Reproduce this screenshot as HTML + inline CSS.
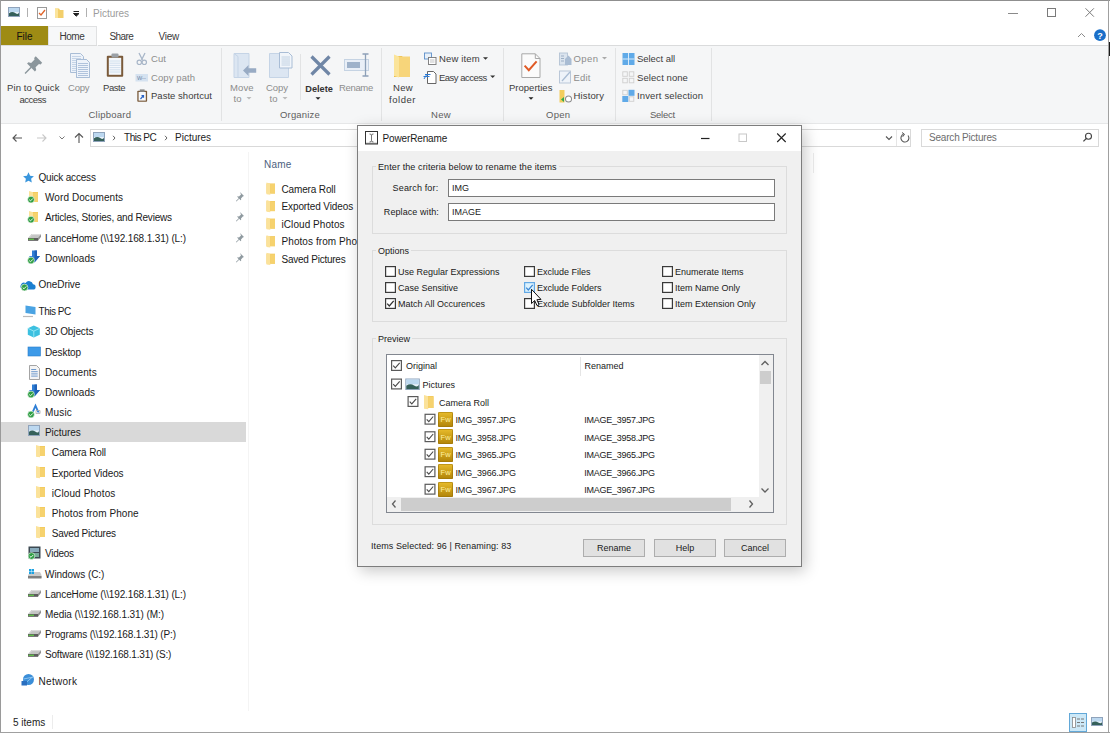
<!DOCTYPE html>
<html><head><meta charset="utf-8">
<style>
*{margin:0;padding:0;box-sizing:border-box}
html,body{width:1110px;height:733px;overflow:hidden;background:#fff;font-family:"Liberation Sans",sans-serif;position:relative}
.a{position:absolute;white-space:nowrap}
.t{position:absolute;white-space:nowrap;font-size:10px;line-height:12px;color:#1a1a1a}
.r{position:absolute;white-space:nowrap;font-size:9.5px;line-height:11px;color:#3c3c3c}
.g{color:#8c8c8c}
.d{position:absolute;white-space:nowrap;font-size:9px;line-height:11px;color:#1a1a1a}
svg{position:absolute;overflow:visible}
.fw{position:absolute;width:15px;height:15px;border-radius:1.5px;background:linear-gradient(#e8bc2c,#b08308);box-shadow:inset 0 0 0 0.6px #9a7206}
</style></head><body>

<div class="a" style="left:0px;top:0px;width:1110px;height:1px;background:#8f8f8f"></div>
<div class="a" style="left:0px;top:0px;width:1px;height:733px;background:#9a9a9a"></div>
<div class="a" style="left:1108px;top:0px;width:1px;height:733px;background:#a0a0a0"></div>
<div class="a" style="left:1109px;top:42px;width:1px;height:14px;background:#1a1a1a"></div>
<div class="a" style="left:0px;top:732px;width:1110px;height:1px;background:#a0a0a0"></div>
<div class="t" style="left:93px;top:8px;color:#9c9c9c">Pictures</div>
<div class="a" style="left:1px;top:26px;width:47px;height:19px;background:#9e8b14"></div>
<div class="t" style="left:16.5px;top:30.5px;color:#111">File</div>
<div class="a" style="left:48px;top:26px;width:49px;height:20px;background:#f7f8f9;border:1px solid #e0e1e2;border-bottom:none"></div>
<div class="t" style="left:59.5px;top:30.5px;color:#3a3a3a;letter-spacing:-0.458px;">Home</div>
<div class="t" style="left:109.5px;top:30.5px;color:#3a3a3a;letter-spacing:-0.596px;">Share</div>
<div class="t" style="left:158.5px;top:30.5px;color:#3a3a3a;letter-spacing:-0.231px;">View</div>
<div class="a" style="left:1px;top:45px;width:1107px;height:79px;background:#f5f6f7;border-top:1px solid #dadbdc;border-bottom:1px solid #e6e7e8"></div>
<div class="a" style="left:97px;top:45px;width:1px;height:1px;background:#f5f6f7"></div>
<div class="a" style="left:221px;top:48px;width:1px;height:73px;background:#e2e3e4"></div>
<div class="a" style="left:381px;top:48px;width:1px;height:73px;background:#e2e3e4"></div>
<div class="a" style="left:503px;top:48px;width:1px;height:73px;background:#e2e3e4"></div>
<div class="a" style="left:615px;top:48px;width:1px;height:73px;background:#e2e3e4"></div>
<div class="a" style="left:711px;top:48px;width:1px;height:73px;background:#e2e3e4"></div>
<div class="a" style="left:300px;top:54px;width:1px;height:46px;background:#e2e3e4"></div>
<div class="r" style="left:7px;top:82.2px;letter-spacing:0.108px;">Pin to Quick</div>
<div class="r" style="left:19.5px;top:93.8px;letter-spacing:-0.533px;">access</div>
<div class="r g" style="left:68px;top:82.2px;letter-spacing:-0.192px;">Copy</div>
<div class="r" style="left:103px;top:82.2px;letter-spacing:-0.423px;">Paste</div>
<div class="r g" style="left:151px;top:53.4px;letter-spacing:0.059px;">Cut</div>
<div class="r g" style="left:151px;top:72.0px;letter-spacing:0.100px;">Copy path</div>
<div class="r" style="left:151px;top:90.2px;letter-spacing:0.021px;">Paste shortcut</div>
<div class="r" style="left:88.5px;top:109.4px;letter-spacing:0.230px;color:#5e5e5e">Clipboard</div>
<div class="r g" style="left:230px;top:82.4px;letter-spacing:0.090px;">Move</div>
<div class="r g" style="left:233.5px;top:93.4px;">to</div>
<div class="r g" style="left:266px;top:82.4px;letter-spacing:-0.026px;">Copy</div>
<div class="r g" style="left:269.5px;top:93.4px;">to</div>
<div class="r" style="left:305.3px;top:83.8px;font-weight:bold;font-size:9.2px;color:#333;letter-spacing:-0.002px;">Delete</div>
<div class="r g" style="left:339px;top:82.4px;letter-spacing:-0.341px;">Rename</div>
<div class="r" style="left:280px;top:109.4px;letter-spacing:0.165px;color:#5e5e5e">Organize</div>
<div class="r" style="left:393px;top:82.4px;letter-spacing:0.298px;">New</div>
<div class="r" style="left:389px;top:93.6px;letter-spacing:0.548px;">folder</div>
<div class="r" style="left:439px;top:52.8px;letter-spacing:0.159px;">New item</div>
<div class="r" style="left:439px;top:71.8px;letter-spacing:-0.502px;">Easy access</div>
<div class="r" style="left:431px;top:109.4px;letter-spacing:0.298px;color:#5e5e5e">New</div>
<div class="r" style="left:509px;top:82.4px;letter-spacing:0.012px;">Properties</div>
<div class="r g" style="left:573.5px;top:52.8px;letter-spacing:0.421px;">Open</div>
<div class="r g" style="left:573.5px;top:71.8px;letter-spacing:0.177px;">Edit</div>
<div class="r" style="left:573.5px;top:90.2px;letter-spacing:0.141px;">History</div>
<div class="r" style="left:546px;top:109.4px;letter-spacing:0.254px;color:#5e5e5e">Open</div>
<div class="r" style="left:637px;top:52.8px;letter-spacing:-0.038px;">Select all</div>
<div class="r" style="left:637px;top:71.8px;letter-spacing:0.073px;">Select none</div>
<div class="r" style="left:637px;top:90.2px;letter-spacing:0.141px;">Invert selection</div>
<div class="r" style="left:650px;top:109.4px;letter-spacing:-0.261px;color:#5e5e5e">Select</div>
<div class="a" style="left:90px;top:129px;width:821px;height:18px;border:1px solid #d9d9d9"></div>
<div class="a" style="left:896px;top:130px;width:1px;height:16px;background:#e5e5e5"></div>
<div class="t" style="left:124px;top:131.5px;color:#222;letter-spacing:-0.460px;">This PC</div>
<div class="t" style="left:175px;top:131.5px;color:#222">Pictures</div>
<div class="a" style="left:921px;top:129px;width:178px;height:18px;border:1px solid #d9d9d9"></div>
<div class="t" style="left:929px;top:131.5px;color:#6d6d6d;letter-spacing:-0.199px;">Search Pictures</div>
<div class="a" style="left:1px;top:422px;width:245px;height:20px;background:#d9d9d9"></div>
<div class="a" style="left:248px;top:152px;width:1px;height:559px;background:#f4f4f4"></div>
<div class="a" style="left:813px;top:153px;width:1px;height:20px;background:#ececec"></div>
<div class="t" style="left:38.5px;top:172px;letter-spacing:-0.187px;">Quick access</div>
<div class="t" style="left:45.0px;top:192px;letter-spacing:0.080px;">Word Documents</div>
<div class="t" style="left:45.0px;top:212px;letter-spacing:-0.178px;">Articles, Stories, and Reviews</div>
<div class="t" style="left:45.0px;top:233px;letter-spacing:-0.136px;">LanceHome (\\192.168.1.31) (L:)</div>
<div class="t" style="left:45.0px;top:253px;letter-spacing:0.079px;">Downloads</div>
<div class="t" style="left:38.5px;top:279px;letter-spacing:-0.062px;">OneDrive</div>
<div class="t" style="left:38.5px;top:306px;letter-spacing:-0.460px;">This PC</div>
<div class="t" style="left:45.0px;top:326px;letter-spacing:-0.118px;">3D Objects</div>
<div class="t" style="left:45.0px;top:347px;letter-spacing:-0.097px;">Desktop</div>
<div class="t" style="left:45.0px;top:367px;letter-spacing:0.153px;">Documents</div>
<div class="t" style="left:45.0px;top:387px;letter-spacing:0.079px;">Downloads</div>
<div class="t" style="left:45.0px;top:407px;letter-spacing:0.172px;">Music</div>
<div class="t" style="left:45.0px;top:427px;letter-spacing:-0.046px;">Pictures</div>
<div class="t" style="left:51.8px;top:447px;letter-spacing:-0.137px;">Camera Roll</div>
<div class="t" style="left:51.8px;top:468px;letter-spacing:-0.100px;">Exported Videos</div>
<div class="t" style="left:51.8px;top:488px;letter-spacing:0.104px;">iCloud Photos</div>
<div class="t" style="left:51.8px;top:508px;letter-spacing:0.075px;">Photos from Phone</div>
<div class="t" style="left:51.8px;top:528px;letter-spacing:-0.235px;">Saved Pictures</div>
<div class="t" style="left:45.0px;top:548px;letter-spacing:-0.279px;">Videos</div>
<div class="t" style="left:45.0px;top:569px;letter-spacing:-0.055px;">Windows (C:)</div>
<div class="t" style="left:45.0px;top:589px;letter-spacing:-0.136px;">LanceHome (\\192.168.1.31) (L:)</div>
<div class="t" style="left:45.0px;top:609px;letter-spacing:-0.083px;">Media (\\192.168.1.31) (M:)</div>
<div class="t" style="left:45.0px;top:629px;letter-spacing:-0.159px;">Programs (\\192.168.1.31) (P:)</div>
<div class="t" style="left:45.0px;top:649px;letter-spacing:-0.187px;">Software (\\192.168.1.31) (S:)</div>
<div class="t" style="left:38.5px;top:676px;letter-spacing:0.304px;">Network</div>
<div class="t" style="left:13px;top:716.5px;color:#222">5 items</div>
<div class="a" style="left:52px;top:715px;width:1px;height:14px;background:#ececec"></div>
<div class="t" style="left:264px;top:159px;color:#4d6180;letter-spacing:0.242px;">Name</div>
<div class="t" style="left:281.5px;top:183.7px;letter-spacing:-0.147px;">Camera Roll</div>
<div class="t" style="left:281.5px;top:201.2px;letter-spacing:-0.107px;">Exported Videos</div>
<div class="t" style="left:281.5px;top:218.8px;letter-spacing:0.070px;">iCloud Photos</div>
<div class="t" style="left:281.5px;top:236.3px;letter-spacing:0.075px;">Photos from Phone</div>
<div class="t" style="left:281.5px;top:253.9px;letter-spacing:-0.235px;">Saved Pictures</div>
<div class="a" style="left:1069px;top:713px;width:18px;height:19px;background:#cce8f7;border:1px solid #62a8d8"></div>
<svg style="left:0;top:0" width="1110" height="733"><rect x="8.5" y="7.5" width="11" height="9" fill="#e9f2fb" stroke="#8fa3bb" stroke-width="1"/><rect x="9" y="8" width="10" height="4.0" fill="#bcd8f0"/><path d="M9 16V13.2Q12.2 11.0 15.2 13.0T19 12.5V16Z" fill="#35605a"/><path d="M27.5 8v9M86.5 8v9" stroke="#b0b0b0" stroke-width="1"/><rect x="37.5" y="7.5" width="9" height="11" fill="#fff" stroke="#9a9a9a" stroke-width="1"/><path d="M39 13l2 2l4-5" fill="none" stroke="#e0642a" stroke-width="1.3"/><path d="M55 8.5h4l1 1.5h3.5v8h-8.5z" fill="#f3cf6b"/><path d="M55 8.5h3v9.5h-3z" fill="#fbe49c"/><path d="M73.5 11.5h5.5M73.5 13.5h5.5l-2.75 2.7z" fill="#222" stroke="#222" stroke-width="1"/><path d="M1008 13.5h10" stroke="#8a8a8a" stroke-width="1"/><rect x="1047.5" y="8.5" width="8" height="8" fill="none" stroke="#7a7a7a" stroke-width="1"/><path d="M1085.5 8.3l8.4 8.4M1093.9 8.3l-8.4 8.4" stroke="#7a7a7a" stroke-width="1"/><path d="M1078 37l3.5-3.5l3.5 3.5" fill="none" stroke="#8a8a8a" stroke-width="1"/><circle cx="1100" cy="35.2" r="5.9" fill="#1a6fc9"/><text x="1100" y="38.8" font-size="9" font-weight="bold" fill="#fff" text-anchor="middle" font-family="Liberation Sans">?</text><path d="M315.5 97.2h5l-2.5 2.6z" fill="#222"/><path d="M528.5 97.2h5l-2.5 2.6z" fill="#222"/><path d="M483.0 57.2h5l-2.5 2.6z" fill="#333"/><path d="M490.2 75.5h5l-2.5 2.6z" fill="#333"/><path d="M602.0 57.0h5l-2.5 2.6z" fill="#aaa"/><path d="M246.5 97.0h5l-2.5 2.6z" fill="#bbb"/><path d="M282.5 97.0h5l-2.5 2.6z" fill="#bbb"/><g transform="translate(32 66.5) rotate(45) scale(1.2)" fill="#8b969c"><path d="M-3.8 -8.2H3.8V-6.3L2.6 -5.6V-1.6L4.6 -0.4V1.2H-4.6V-0.4L-2.6 -1.6V-5.6L-3.8 -6.3Z"/><rect x="-0.6" y="1" width="1.2" height="7.2"/></g><path d="M70.5 53.5h10l3 3v16h-13z" fill="#eef3fa" stroke="#a9bdd6" stroke-width="1"/><path d="M76.5 59.5h10l3 3v15h-13z" fill="#eef3fa" stroke="#a9bdd6" stroke-width="1"/><path d="M72 56.5h9" stroke="#c0d0e4" stroke-width="0.9"/><path d="M72 58.5h9" stroke="#c0d0e4" stroke-width="0.9"/><path d="M72 60.5h9" stroke="#c0d0e4" stroke-width="0.9"/><path d="M72 62.5h9" stroke="#c0d0e4" stroke-width="0.9"/><path d="M72 64.5h9" stroke="#c0d0e4" stroke-width="0.9"/><path d="M72 66.5h9" stroke="#c0d0e4" stroke-width="0.9"/><path d="M72 68.5h9" stroke="#c0d0e4" stroke-width="0.9"/><path d="M72 70.5h9" stroke="#c0d0e4" stroke-width="0.9"/><path d="M76.5 59.5h10l3 3v15h-13z" fill="#eef3fa" stroke="#a9bdd6" stroke-width="1"/><path d="M78 63.5h10" stroke="#a8bdd8" stroke-width="0.9"/><path d="M78 65.5h10" stroke="#a8bdd8" stroke-width="0.9"/><path d="M78 67.5h10" stroke="#a8bdd8" stroke-width="0.9"/><path d="M78 69.5h10" stroke="#a8bdd8" stroke-width="0.9"/><path d="M78 71.5h10" stroke="#a8bdd8" stroke-width="0.9"/><path d="M78 73.5h10" stroke="#a8bdd8" stroke-width="0.9"/><path d="M78 75.5h10" stroke="#a8bdd8" stroke-width="0.9"/><rect x="106.8" y="55.8" width="16.4" height="21" rx="1" fill="#7a5a3a"/><rect x="108.8" y="57.8" width="12.4" height="17" fill="#f4f8fc"/><path d="M109.5 61.0h11" stroke="#c9d9ea" stroke-width="0.8"/><path d="M109.5 63.2h11" stroke="#c9d9ea" stroke-width="0.8"/><path d="M109.5 65.4h11" stroke="#c9d9ea" stroke-width="0.8"/><path d="M109.5 67.6h11" stroke="#c9d9ea" stroke-width="0.8"/><path d="M109.5 69.8h11" stroke="#c9d9ea" stroke-width="0.8"/><path d="M109.5 72.0h11" stroke="#c9d9ea" stroke-width="0.8"/><rect x="111.5" y="53.5" width="7" height="4" rx="1" fill="#9aa0a6"/><path d="M139 53l3.5 7M145 53l-3.5 7" stroke="#a8b6c8" stroke-width="1.3"/><circle cx="139.3" cy="62.3" r="2.2" fill="none" stroke="#a8b6c8" stroke-width="1.2"/><circle cx="144.3" cy="62.3" r="2.2" fill="none" stroke="#a8b6c8" stroke-width="1.2"/><rect x="135.5" y="74" width="12.5" height="7.5" fill="#d5e2f0"/><text x="137" y="80" font-size="5.5" fill="#6d85a6" font-family="Liberation Sans">W--</text><rect x="137.3" y="90.8" width="9.8" height="11" rx="0.8" fill="#7a5a3a"/><rect x="138.6" y="92" width="7.2" height="8.6" fill="#f6f8fb"/><rect x="139.8" y="89.4" width="4.8" height="2.5" fill="#888"/><path d="M140.5 99l3-3.3M141.5 95.7h2v2" stroke="#2a64c5" stroke-width="1.2" fill="none"/><path d="M234 53.5h15v24h-15z" fill="#dce6f2" stroke="#c5d4e6" stroke-width="1"/><path d="M234 53.5l4 3v21" fill="none" stroke="#c5d4e6"/><path d="M243 70.5l5.5-5.5v3.3h7.7v4.4h-7.7v3.3z" fill="#98abc4"/><path d="M269.5 53.5h19v24h-19z" fill="#dce6f2" stroke="#c5d4e6" stroke-width="1"/><path d="M279.5 52.5h9l3.5 3.5v12h-12.5z" fill="#f1f5fa" stroke="#a9bdd6" stroke-width="1"/><path d="M281.5 57h8.5" stroke="#b8c9dd" stroke-width="0.8"/><path d="M281.5 59h8.5" stroke="#b8c9dd" stroke-width="0.8"/><path d="M281.5 61h8.5" stroke="#b8c9dd" stroke-width="0.8"/><path d="M281.5 63h8.5" stroke="#b8c9dd" stroke-width="0.8"/><path d="M281.5 65h8.5" stroke="#b8c9dd" stroke-width="0.8"/><path d="M311.5 56.5l18 18M329.5 56.5l-18 18" stroke="#6f86a6" stroke-width="3.2"/><rect x="344.5" y="59.5" width="24" height="11" fill="#e9eff7" stroke="#c5d3e3" stroke-width="1"/><rect x="347" y="62" width="13" height="6" fill="#9fb2ca"/><path d="M362.5 54h6M362.5 76h6M365.5 54v22" stroke="#8da0b8" stroke-width="1.3" fill="none"/><path d="M394 56h8l1.5 2.5h6.5v18.5h-16z" fill="#e9b93e"/><path d="M394 54.5l5 2v21l-5-1.5z" fill="#fbe49a"/><path d="M399 56.5h11v20.5h-11z" fill="#f7d57a"/><rect x="424.5" y="53" width="7" height="6" fill="#e8f0f8" stroke="#5c8fc9" stroke-width="0.9"/><rect x="428.5" y="57.5" width="7.5" height="7" fill="#fff" stroke="#777" stroke-width="0.9"/><path d="M430 60h4.5M430 62h4.5" stroke="#aaa" stroke-width="0.7"/><path d="M427.5 71.5h6l2.5 2.5v9.5h-8.5z" fill="#fff" stroke="#555" stroke-width="0.9"/><path d="M423.5 76.5h6M425 74.5h5.5M424 79l3-5" stroke="#2d7bd6" stroke-width="1"/><path d="M521.8 53.8h13.5l4.7 4.7v19h-18.2z" fill="#fbfbfb" stroke="#a8a8a8" stroke-width="1"/><path d="M535.3 53.8v4.7h4.7" fill="none" stroke="#a8a8a8"/><path d="M524.6 65.6l4.2 4.6l7.8-8.8" fill="none" stroke="#e05a25" stroke-width="2"/><rect x="559.5" y="53" width="8" height="12" fill="#dbe4ee" stroke="#b4c3d4" stroke-width="0.9"/><path d="M561 56h3M561 58.5h3M561 61h3" stroke="#95a8bf" stroke-width="0.9"/><path d="M565 65v-6l3.5-3.5l3 3.5v6z" fill="#a9bcd3"/><rect x="559.5" y="71" width="11" height="12" fill="#eef3f9" stroke="#b4c3d4" stroke-width="0.9"/><path d="M562 81l8-9" stroke="#a9bcd3" stroke-width="1.3"/><path d="M559.5 90h5v12.5h-5z" fill="#f2cd5c"/><circle cx="568.5" cy="99" r="3.5" fill="#8a8a8a"/><circle cx="568.5" cy="99" r="2.5" fill="#fff"/><path d="M561 99.5l3-2.5v5z" fill="#2fa84f"/><rect x="622.5" y="53" width="12" height="12" fill="#60aae8"/><path d="M628.5 53v12M622.5 59h12" stroke="#d7ebfb" stroke-width="1"/><rect x="622.8" y="71.8" width="4.5" height="4.5" fill="none" stroke="#cfcfcf" stroke-width="0.9"/><rect x="622.8" y="78.3" width="4.5" height="4.5" fill="none" stroke="#cfcfcf" stroke-width="0.9"/><rect x="629.3" y="71.8" width="4.5" height="4.5" fill="none" stroke="#cfcfcf" stroke-width="0.9"/><rect x="629.3" y="78.3" width="4.5" height="4.5" fill="none" stroke="#cfcfcf" stroke-width="0.9"/><rect x="622.8" y="90.3" width="4.5" height="4.5" fill="none" stroke="#cfcfcf" stroke-width="0.9"/><rect x="629.3" y="96.8" width="4.5" height="4.5" fill="none" stroke="#cfcfcf" stroke-width="0.9"/><rect x="628.5" y="89.8" width="6" height="6" fill="#60aae8"/><rect x="622.3" y="96" width="6" height="6" fill="#60aae8"/><path d="M13 138h9M16.5 134.5l-3.5 3.5l3.5 3.5" fill="none" stroke="#555" stroke-width="1.1"/><path d="M37 138h9M42.5 134.5l3.5 3.5l-3.5 3.5" fill="none" stroke="#c8c8c8" stroke-width="1.1"/><path d="M59.5 136.5l2.5 2.5l2.5-2.5" fill="none" stroke="#777" stroke-width="1"/><path d="M79 143v-9.5M75 137.5l4-4l4 4" fill="none" stroke="#555" stroke-width="1.1"/><rect x="93.5" y="132.5" width="11" height="9" fill="#e9f2fb" stroke="#8fa3bb" stroke-width="1"/><rect x="94" y="133" width="10" height="4.0" fill="#bcd8f0"/><path d="M94 141V138.2Q97.2 136.0 100.2 138.0T104 137.5V141Z" fill="#35605a"/><path d="M113 135.8l2 2.2l-2 2.2M165 135.8l2 2.2l-2 2.2" fill="none" stroke="#666" stroke-width="1"/><path d="M886 136.5l3 3l3-3" fill="none" stroke="#555" stroke-width="1.1"/><path d="M908 135.5a4 4 0 1 1 -4.5 -1.2" fill="none" stroke="#555" stroke-width="1.1"/><path d="M902 132.5l2.5 1.8l-1.8 2.5" fill="none" stroke="#555" stroke-width="1"/><circle cx="1088.5" cy="136.3" r="3" fill="none" stroke="#444" stroke-width="1.1"/><path d="M1086.4 138.4l-3 3" stroke="#444" stroke-width="1.3"/><path d="M240 192l4 4l-1.2 0.4l-1.8 2l0.2 1.3l-0.5 0.5l-1.5-1.5l-2.8 2.8l-0.5-0.5l2.8-2.8l-1.5-1.5l0.5-0.5l1.3 0.2l2-1.8z" fill="#8f9aa0"/><path d="M240 212l4 4l-1.2 0.4l-1.8 2l0.2 1.3l-0.5 0.5l-1.5-1.5l-2.8 2.8l-0.5-0.5l2.8-2.8l-1.5-1.5l0.5-0.5l1.3 0.2l2-1.8z" fill="#8f9aa0"/><path d="M240 233l4 4l-1.2 0.4l-1.8 2l0.2 1.3l-0.5 0.5l-1.5-1.5l-2.8 2.8l-0.5-0.5l2.8-2.8l-1.5-1.5l0.5-0.5l1.3 0.2l2-1.8z" fill="#8f9aa0"/><path d="M240 253l4 4l-1.2 0.4l-1.8 2l0.2 1.3l-0.5 0.5l-1.5-1.5l-2.8 2.8l-0.5-0.5l2.8-2.8l-1.5-1.5l0.5-0.5l1.3 0.2l2-1.8z" fill="#8f9aa0"/><path d="M28.5 172.3l1.6 3.4l3.8 0.5l-2.8 2.6l0.7 3.7l-3.3-1.8l-3.3 1.8l0.7-3.7l-2.8-2.6l3.8-0.5z" fill="#3a96dd"/><path d="M29 192h9v10h-9z" fill="#f0c450"/><path d="M29 191l4.05 1.2v11l-4.05 -0.5z" fill="#fbe29a"/><path d="M33.05 192.5h4.95v9.5h-4.95z" fill="#f6d26e"/><circle cx="31" cy="199.6" r="3.4" fill="#2f9e44" stroke="#fff" stroke-width="0.6"/><path d="M29.2 199.6l1.3 1.3l2.3-2.4" fill="none" stroke="#fff" stroke-width="0.9"/><path d="M29 212h9v10h-9z" fill="#f0c450"/><path d="M29 211l4.05 1.2v11l-4.05 -0.5z" fill="#fbe29a"/><path d="M33.05 212.5h4.95v9.5h-4.95z" fill="#f6d26e"/><circle cx="31" cy="219.6" r="3.4" fill="#2f9e44" stroke="#fff" stroke-width="0.6"/><path d="M29.2 219.6l1.3 1.3l2.3-2.4" fill="none" stroke="#fff" stroke-width="0.9"/><path d="M28 238L31.5 234H41V236.5L38 240.5H28Z" fill="#c4c4c4"/><path d="M28 238H38V240.8H28Z" fill="#5d5d5d"/><path d="M38 238L41 234.5V236.8L38 240.8Z" fill="#8e8e8e"/><path d="M28.5 239.3H34" stroke="#63c24a" stroke-width="1.3"/><path d="M29 237.6L31.8 234.6H40.5" stroke="#e6e6e6" stroke-width="0.8" fill="none"/><path d="M32 250.5h5v5.5h3l-5.5 6.5l-5.5-6.5h3z" fill="#2f7fd6"/><path d="M34.5 250.5h2.5v5.5h3l-5.5 6.5z" fill="#1f62b8"/><circle cx="31" cy="260.5" r="3.4" fill="#2f9e44" stroke="#fff" stroke-width="0.6"/><path d="M29.2 260.5l1.3 1.3l2.3-2.4" fill="none" stroke="#fff" stroke-width="0.9"/><path d="M22.5 289.5h10.5a2.6 2.6 0 0 0 0-5.2a4 4 0 0 0-7.4-1.2a3 3 0 0 0-3.1 6.4z" fill="#1b7fd0"/><circle cx="24.5" cy="287.5" r="3.4" fill="#2f9e44" stroke="#fff" stroke-width="0.6"/><path d="M22.7 287.5l1.3 1.3l2.3-2.4" fill="none" stroke="#fff" stroke-width="0.9"/><path d="M25.5 305.5l10 1.5v7.5l-10-1.5z" fill="#4aa3e3"/><path d="M23 316.5h10" stroke="#bbb" stroke-width="1.2"/><path d="M33.8 325.5l6 2.8v6.4l-6 2.8l-6-2.8v-6.4z" fill="#3cc0e0"/><path d="M27.8 328.3l6 2.8l6-2.8M33.8 331.1v6.4" fill="none" stroke="#a8ecf7" stroke-width="0.8"/><rect x="28" y="347" width="12.5" height="9" fill="#3d9ae8" stroke="#2a7cc8" stroke-width="0.6"/><path d="M29.5 365.5h7l3 3v11h-10z" fill="#f4f4f4" stroke="#9a9a9a" stroke-width="0.9"/><path d="M31.2 369.5h5M31.2 371.7h6.5M31.2 373.9h6.5M31.2 376.1h6.5" stroke="#5f8fc8" stroke-width="0.9"/><path d="M32 384.5h5v5.5h3l-5.5 6.5l-5.5-6.5h3z" fill="#2f7fd6"/><path d="M34.5 384.5h2.5v5.5h3l-5.5 6.5z" fill="#1f62b8"/><circle cx="31" cy="394.5" r="3.4" fill="#2f9e44" stroke="#fff" stroke-width="0.6"/><path d="M29.2 394.5l1.3 1.3l2.3-2.4" fill="none" stroke="#fff" stroke-width="0.9"/><path d="M35.5 403.5l-4 9h2l2-4.5l2 4.5h2z" fill="#2f7fd6"/><path d="M36 410.5h4v3h-4z" fill="none" stroke="#aaa" stroke-width="0.8"/><circle cx="31" cy="414.5" r="3.4" fill="#2f9e44" stroke="#fff" stroke-width="0.6"/><path d="M29.2 414.5l1.3 1.3l2.3-2.4" fill="none" stroke="#fff" stroke-width="0.9"/><rect x="28.5" y="425.5" width="11" height="10" fill="#e9f2fb" stroke="#8fa3bb" stroke-width="1"/><rect x="29" y="426" width="10" height="4.5" fill="#bcd8f0"/><path d="M29 435V431.82Q32.2 429.4 35.2 431.6T39 431.05V435Z" fill="#35605a"/><path d="M36 446h9v10h-9z" fill="#f0c450"/><path d="M36 445l4.05 1.2v11l-4.05 -0.5z" fill="#fbe29a"/><path d="M40.05 446.5h4.95v9.5h-4.95z" fill="#f6d26e"/><path d="M36 467h9v10h-9z" fill="#f0c450"/><path d="M36 466l4.05 1.2v11l-4.05 -0.5z" fill="#fbe29a"/><path d="M40.05 467.5h4.95v9.5h-4.95z" fill="#f6d26e"/><path d="M36 487h9v10h-9z" fill="#f0c450"/><path d="M36 486l4.05 1.2v11l-4.05 -0.5z" fill="#fbe29a"/><path d="M40.05 487.5h4.95v9.5h-4.95z" fill="#f6d26e"/><path d="M36 507h9v10h-9z" fill="#f0c450"/><path d="M36 506l4.05 1.2v11l-4.05 -0.5z" fill="#fbe29a"/><path d="M40.05 507.5h4.95v9.5h-4.95z" fill="#f6d26e"/><path d="M36 527h9v10h-9z" fill="#f0c450"/><path d="M36 526l4.05 1.2v11l-4.05 -0.5z" fill="#fbe29a"/><path d="M40.05 527.5h4.95v9.5h-4.95z" fill="#f6d26e"/><rect x="28.5" y="546.5" width="12" height="12" fill="#3d4a52"/><rect x="30" y="548" width="9" height="4" fill="#8ab"/><rect x="30" y="553" width="9" height="4" fill="#7a9"/><circle cx="31.5" cy="556" r="3.4" fill="#2f9e44" stroke="#fff" stroke-width="0.6"/><path d="M29.7 556l1.3 1.3l2.3-2.4" fill="none" stroke="#fff" stroke-width="0.9"/><path d="M28 575l3-3h9l1.5 3v3h-13.5z" fill="#c9c9c9"/><path d="M28 576h13.5v2.5h-13.5z" fill="#7f7f7f"/><rect x="29" y="569" width="2.3" height="2.3" fill="#1ba1e2"/><rect x="31.7" y="569" width="2.3" height="2.3" fill="#1ba1e2"/><rect x="29" y="571.7" width="2.3" height="2.3" fill="#1ba1e2"/><rect x="31.7" y="571.7" width="2.3" height="2.3" fill="#1ba1e2"/><path d="M28 594L31.5 590H41V592.5L38 596.5H28Z" fill="#c4c4c4"/><path d="M28 594H38V596.8H28Z" fill="#5d5d5d"/><path d="M38 594L41 590.5V592.8L38 596.8Z" fill="#8e8e8e"/><path d="M28.5 595.3H34" stroke="#63c24a" stroke-width="1.3"/><path d="M29 593.6L31.8 590.6H40.5" stroke="#e6e6e6" stroke-width="0.8" fill="none"/><path d="M28 614L31.5 610H41V612.5L38 616.5H28Z" fill="#c4c4c4"/><path d="M28 614H38V616.8H28Z" fill="#5d5d5d"/><path d="M38 614L41 610.5V612.8L38 616.8Z" fill="#8e8e8e"/><path d="M28.5 615.3H34" stroke="#63c24a" stroke-width="1.3"/><path d="M29 613.6L31.8 610.6H40.5" stroke="#e6e6e6" stroke-width="0.8" fill="none"/><path d="M28 634L31.5 630H41V632.5L38 636.5H28Z" fill="#c4c4c4"/><path d="M28 634H38V636.8H28Z" fill="#5d5d5d"/><path d="M38 634L41 630.5V632.8L38 636.8Z" fill="#8e8e8e"/><path d="M28.5 635.3H34" stroke="#63c24a" stroke-width="1.3"/><path d="M29 633.6L31.8 630.6H40.5" stroke="#e6e6e6" stroke-width="0.8" fill="none"/><path d="M28 654L31.5 650H41V652.5L38 656.5H28Z" fill="#c4c4c4"/><path d="M28 654H38V656.8H28Z" fill="#5d5d5d"/><path d="M38 654L41 650.5V652.8L38 656.8Z" fill="#8e8e8e"/><path d="M28.5 655.3H34" stroke="#63c24a" stroke-width="1.3"/><path d="M29 653.6L31.8 650.6H40.5" stroke="#e6e6e6" stroke-width="0.8" fill="none"/><circle cx="28.5" cy="679.5" r="5.5" fill="#3b8ed8"/><path d="M23.5 679l10-2M25.5 683l7-6" stroke="#9fd0f5" stroke-width="0.8"/><rect x="21.5" y="681" width="5.5" height="4.5" fill="#2a6fc0"/><path d="M266.5 183.5h8.5v10h-8.5z" fill="#f0c450"/><path d="M266.5 182.5l3.825 1.2v11l-3.825 -0.5z" fill="#fbe29a"/><path d="M270.325 184.0h4.675000000000001v9.5h-4.675000000000001z" fill="#f6d26e"/><path d="M266.5 201.1h8.5v10h-8.5z" fill="#f0c450"/><path d="M266.5 200.1l3.825 1.2v11l-3.825 -0.5z" fill="#fbe29a"/><path d="M270.325 201.6h4.675000000000001v9.5h-4.675000000000001z" fill="#f6d26e"/><path d="M266.5 218.6h8.5v10h-8.5z" fill="#f0c450"/><path d="M266.5 217.6l3.825 1.2v11l-3.825 -0.5z" fill="#fbe29a"/><path d="M270.325 219.1h4.675000000000001v9.5h-4.675000000000001z" fill="#f6d26e"/><path d="M266.5 236.2h8.5v10h-8.5z" fill="#f0c450"/><path d="M266.5 235.2l3.825 1.2v11l-3.825 -0.5z" fill="#fbe29a"/><path d="M270.325 236.7h4.675000000000001v9.5h-4.675000000000001z" fill="#f6d26e"/><path d="M266.5 253.7h8.5v10h-8.5z" fill="#f0c450"/><path d="M266.5 252.7l3.825 1.2v11l-3.825 -0.5z" fill="#fbe29a"/><path d="M270.325 254.2h4.675000000000001v9.5h-4.675000000000001z" fill="#f6d26e"/><rect x="1072.5" y="717.5" width="3" height="10" fill="#fff" stroke="#888" stroke-width="0.8"/><path d="M1077 719h3M1081 719h3M1077 722.5h3M1081 722.5h3M1077 726h3M1081 726h3" stroke="#777" stroke-width="1"/><rect x="1091.5" y="717.5" width="11" height="8" fill="#e9f2fb" stroke="#8fa3bb" stroke-width="1"/><rect x="1092" y="718" width="10" height="3.5" fill="#bcd8f0"/><path d="M1092 725V722.58Q1095.2 720.6 1098.2 722.4T1102 721.95V725Z" fill="#35605a"/></svg>
<div class="a" style="left:357px;top:125px;width:445px;height:442px;background:#f0f0f0;border:1px solid #7d7d7d;box-shadow:3px 4px 14px rgba(0,0,0,0.22)"></div>
<div class="a" style="left:358px;top:126px;width:443px;height:25px;background:#fff"></div>
<div class="d" style="left:382.6px;top:133.2px;font-size:10px;line-height:12px;letter-spacing:-0.154px;">PowerRename</div>
<div class="a" style="left:372px;top:166px;width:415px;height:68px;border:1px solid #dcdcdc"></div>
<div class="d" style="left:376px;top:162px;padding:0 2px;background:#f0f0f0;letter-spacing:0.105px;">Enter the criteria below to rename the items</div>
<div class="a" style="left:372px;top:250px;width:415px;height:72px;border:1px solid #dcdcdc"></div>
<div class="d" style="left:376px;top:246px;padding:0 2px;background:#f0f0f0;">Options</div>
<div class="a" style="left:372px;top:338px;width:415px;height:187px;border:1px solid #dcdcdc"></div>
<div class="d" style="left:376px;top:334px;padding:0 2px;background:#f0f0f0;">Preview</div>
<div class="d" style="left:392.6px;top:183px;letter-spacing:0.158px;">Search for:</div>
<div class="d" style="left:383.8px;top:207px;letter-spacing:0.081px;">Replace with:</div>
<div class="a" style="left:448px;top:179px;width:327px;height:18px;background:#fff;border:1px solid #7a7a7a"></div>
<div class="a" style="left:448px;top:203px;width:327px;height:18px;background:#fff;border:1px solid #7a7a7a"></div>
<div class="d" style="left:452px;top:183px;">IMG</div>
<div class="d" style="left:452px;top:207px;">IMAGE</div>
<div class="d" style="left:398px;top:266.8px;">Use Regular Expressions</div>
<div class="d" style="left:398px;top:282.8px;">Case Sensitive</div>
<div class="d" style="left:398px;top:298.8px;">Match All Occurences</div>
<div class="d" style="left:537px;top:266.8px;">Exclude Files</div>
<div class="d" style="left:537px;top:282.8px;">Exclude Folders</div>
<div class="d" style="left:537px;top:298.8px;">Exclude Subfolder Items</div>
<div class="d" style="left:675px;top:266.8px;">Enumerate Items</div>
<div class="d" style="left:675px;top:282.8px;">Item Name Only</div>
<div class="d" style="left:675px;top:298.8px;">Item Extension Only</div>
<div class="a" style="left:386px;top:354px;width:388px;height:159px;background:#fff;border:1px solid #828790"></div>
<div class="a" style="left:759px;top:355px;width:14px;height:157px;background:#f0f0f0"></div>
<div class="a" style="left:387px;top:497px;width:386px;height:15px;background:#f0f0f0"></div>
<div class="a" style="left:401px;top:498px;width:330px;height:13px;background:#cdcdcd"></div>
<div class="a" style="left:760px;top:371px;width:11px;height:13px;background:#cdcdcd"></div>
<div class="a" style="left:580px;top:357px;width:1px;height:19px;background:#e5e5e5"></div>
<div class="d" style="left:406px;top:360.5px;">Original</div>
<div class="d" style="left:584.5px;top:360.5px;">Renamed</div>
<div class="d" style="left:422.5px;top:379.5px;">Pictures</div>
<div class="d" style="left:439px;top:397.5px;">Camera Roll</div>
<div class="fw" style="left:438.3px;top:411.7px"></div>
<div class="d" style="left:455.5px;top:415.4px;letter-spacing:-0.148px;">IMG_3957.JPG</div>
<div class="d" style="left:584.3px;top:415.4px;letter-spacing:-0.249px;">IMAGE_3957.JPG</div>
<div class="fw" style="left:438.3px;top:429.2px"></div>
<div class="d" style="left:455.5px;top:432.9px;letter-spacing:-0.148px;">IMG_3958.JPG</div>
<div class="d" style="left:584.3px;top:432.9px;letter-spacing:-0.249px;">IMAGE_3958.JPG</div>
<div class="fw" style="left:438.3px;top:446.7px"></div>
<div class="d" style="left:455.5px;top:450.4px;letter-spacing:-0.148px;">IMG_3965.JPG</div>
<div class="d" style="left:584.3px;top:450.4px;letter-spacing:-0.249px;">IMAGE_3965.JPG</div>
<div class="fw" style="left:438.3px;top:464.2px"></div>
<div class="d" style="left:455.5px;top:467.9px;letter-spacing:-0.148px;">IMG_3966.JPG</div>
<div class="d" style="left:584.3px;top:467.9px;letter-spacing:-0.249px;">IMAGE_3966.JPG</div>
<div class="fw" style="left:438.3px;top:481.7px"></div>
<div class="d" style="left:455.5px;top:485.4px;letter-spacing:-0.148px;">IMG_3967.JPG</div>
<div class="d" style="left:584.3px;top:485.4px;letter-spacing:-0.249px;">IMAGE_3967.JPG</div>
<div class="d" style="left:371px;top:540.5px;letter-spacing:0.075px;">Items Selected: 96 | Renaming: 83</div>
<div class="a" style="left:583px;top:539px;width:62px;height:18px;background:#e1e1e1;border:1px solid #adadad"></div>
<div class="d" style="left:583px;top:542.5px;width:62px;text-align:center">Rename</div>
<div class="a" style="left:654px;top:539px;width:62px;height:18px;background:#e1e1e1;border:1px solid #adadad"></div>
<div class="d" style="left:654px;top:542.5px;width:62px;text-align:center">Help</div>
<div class="a" style="left:724px;top:539px;width:62px;height:18px;background:#e1e1e1;border:1px solid #adadad"></div>
<div class="d" style="left:724px;top:542.5px;width:62px;text-align:center">Cancel</div>
<svg style="left:0;top:0" width="1110" height="733"><rect x="365.5" y="131.5" width="12" height="12.5" fill="#fff" stroke="#333" stroke-width="1"/><path d="M366 143.3h11" stroke="#555" stroke-width="0.8"/><path d="M369.5 134q2 0 2 1.2q0-1.2 2-1.2M369.5 142q2 0 2-1.2q0 1.2 2 1.2M371.5 135v5.8" stroke="#666" stroke-width="0.9" fill="none"/><path d="M701 138.5h8.5" stroke="#222" stroke-width="1.2"/><rect x="739" y="134" width="7.5" height="7.5" fill="none" stroke="#c8c8c8" stroke-width="1"/><path d="M777.2 133.5l8.5 8.5M785.7 133.5l-8.5 8.5" stroke="#222" stroke-width="1.1"/><rect x="385.6" y="266.6" width="9.8" height="9.8" fill="#fff" stroke="#3a3a3a" stroke-width="1.2"/><rect x="385.6" y="282.6" width="9.8" height="9.8" fill="#fff" stroke="#3a3a3a" stroke-width="1.2"/><rect x="385.6" y="298.6" width="9.8" height="9.8" fill="#fff" stroke="#3a3a3a" stroke-width="1.2"/><path d="M387.2 303.6L389.3 305.9L393.7 300.8" fill="none" stroke="#333" stroke-width="1.3"/><rect x="524.6" y="266.6" width="9.8" height="9.8" fill="#fff" stroke="#3a3a3a" stroke-width="1.2"/><rect x="524.6" y="282.6" width="9.8" height="9.8" fill="#dcf2fe" stroke="#62a8e4" stroke-width="1.2"/><path d="M526.2 287.6L528.3 289.9L532.7 284.8" fill="none" stroke="#3d88d4" stroke-width="1.3"/><rect x="524.6" y="298.6" width="9.8" height="9.8" fill="#fff" stroke="#3a3a3a" stroke-width="1.2"/><rect x="662.6" y="266.6" width="9.8" height="9.8" fill="#fff" stroke="#3a3a3a" stroke-width="1.2"/><rect x="662.6" y="282.6" width="9.8" height="9.8" fill="#fff" stroke="#3a3a3a" stroke-width="1.2"/><rect x="662.6" y="298.6" width="9.8" height="9.8" fill="#fff" stroke="#3a3a3a" stroke-width="1.2"/><path d="M761.5 365l3.5-3.5l3.5 3.5M761.5 488.5l3.5 3.5l3.5-3.5M395.5 500.5l-3 3.5l3 3.5M749.5 500.5l3 3.5l-3 3.5" fill="none" stroke="#606060" stroke-width="1.3"/><rect x="391.6" y="360.6" width="9.8" height="9.8" fill="#fff" stroke="#5a5a5a" stroke-width="1.2"/><path d="M393.2 365.6L395.3 367.9L399.7 362.8" fill="none" stroke="#4a4a4a" stroke-width="1.1"/><rect x="391.6" y="379.1" width="9.8" height="9.8" fill="#fff" stroke="#5a5a5a" stroke-width="1.2"/><path d="M393.2 384.1L395.3 386.4L399.7 381.3" fill="none" stroke="#4a4a4a" stroke-width="1.1"/><rect x="405.8" y="379.0" width="13.5" height="10.5" fill="#e9f2fb" stroke="#8fa3bb" stroke-width="1"/><rect x="406.3" y="379.5" width="12.5" height="4.75" fill="#bcd8f0"/><path d="M406.3 389.0V385.63Q410.375 383.1 414.0 385.4T418.8 384.825V389.0Z" fill="#35605a"/><rect x="408.1" y="396.6" width="9.8" height="9.8" fill="#fff" stroke="#5a5a5a" stroke-width="1.2"/><path d="M409.7 401.6L411.8 403.9L416.2 398.8" fill="none" stroke="#4a4a4a" stroke-width="1.1"/><path d="M424 396h9.5v12h-9.5z" fill="#f0c450"/><path d="M424 395l4.275 1.2v13l-4.275 -0.5z" fill="#fbe29a"/><path d="M428.275 396.5h5.2250000000000005v11.5h-5.2250000000000005z" fill="#f6d26e"/><rect x="425.1" y="414.3" width="9.8" height="9.8" fill="#fff" stroke="#5a5a5a" stroke-width="1.2"/><path d="M426.7 419.3L428.8 421.59999999999997L433.2 416.5" fill="none" stroke="#4a4a4a" stroke-width="1.1"/><text x="440.6" y="422.1" font-size="7.5" fill="#fff0a0" font-family="Liberation Sans">Fw</text><rect x="425.1" y="431.8" width="9.8" height="9.8" fill="#fff" stroke="#5a5a5a" stroke-width="1.2"/><path d="M426.7 436.8L428.8 439.09999999999997L433.2 434.0" fill="none" stroke="#4a4a4a" stroke-width="1.1"/><text x="440.6" y="439.6" font-size="7.5" fill="#fff0a0" font-family="Liberation Sans">Fw</text><rect x="425.1" y="449.3" width="9.8" height="9.8" fill="#fff" stroke="#5a5a5a" stroke-width="1.2"/><path d="M426.7 454.3L428.8 456.59999999999997L433.2 451.5" fill="none" stroke="#4a4a4a" stroke-width="1.1"/><text x="440.6" y="457.1" font-size="7.5" fill="#fff0a0" font-family="Liberation Sans">Fw</text><rect x="425.1" y="466.8" width="9.8" height="9.8" fill="#fff" stroke="#5a5a5a" stroke-width="1.2"/><path d="M426.7 471.8L428.8 474.09999999999997L433.2 469.0" fill="none" stroke="#4a4a4a" stroke-width="1.1"/><text x="440.6" y="474.6" font-size="7.5" fill="#fff0a0" font-family="Liberation Sans">Fw</text><rect x="425.1" y="484.3" width="9.8" height="9.8" fill="#fff" stroke="#5a5a5a" stroke-width="1.2"/><path d="M426.7 489.3L428.8 491.59999999999997L433.2 486.5" fill="none" stroke="#4a4a4a" stroke-width="1.1"/><text x="440.6" y="492.1" font-size="7.5" fill="#fff0a0" font-family="Liberation Sans">Fw</text><path d="M531.5 289.3V303.6L534.7 300.5L537 305.6L539.1 304.7L536.9 299.7L541 299.4Z" fill="#fff" stroke="#111" stroke-width="1"/></svg>
</body></html>
